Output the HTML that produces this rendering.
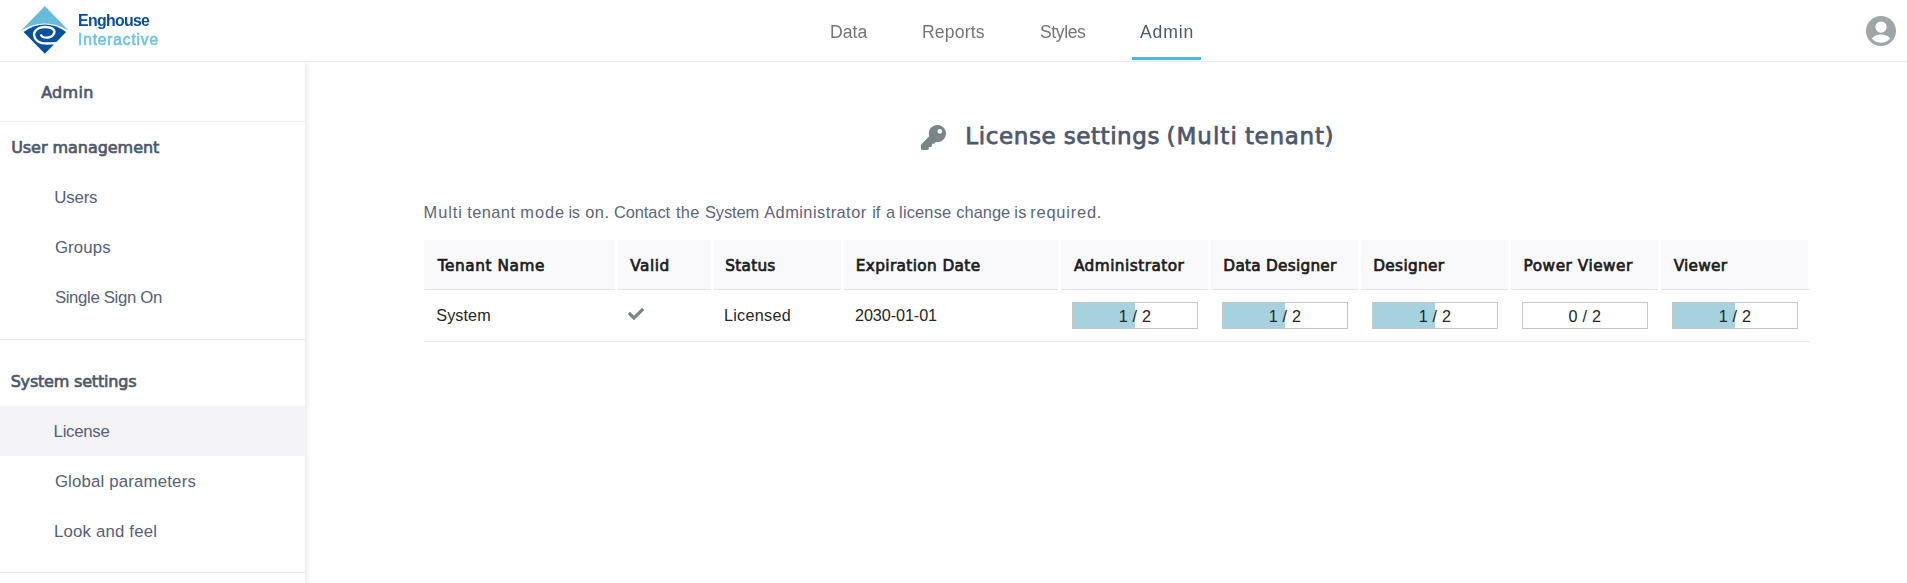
<!DOCTYPE html>
<html lang="en">
<head>
<meta charset="utf-8">
<title>License settings</title>
<style>
*{box-sizing:border-box;margin:0;padding:0}
html,body{width:1907px;height:583px;overflow:hidden;background:#fff}
body{font-family:"Liberation Sans",sans-serif;font-size:16px;color:#222;position:relative}
.abs{position:absolute}
.t{position:absolute;white-space:nowrap;line-height:20px;height:20px}
/* header */
#hdr{left:0;top:0;width:1907px;height:61px;background:#fff}
#hdrline{left:0;top:61px;width:1907px;height:1px;background:#ebecf2}
.nav{color:#757575;will-change:transform}
#n4{color:#4d586e}
#navul{left:1132px;top:57px;width:69px;height:3px;background:#43b9de}
.lg1{color:#054e9f;will-change:transform}
.lg2{color:#6cc3e4;will-change:transform}
/* sidebar */
#side{left:0;top:62px;width:305px;height:600px;background:#fff;box-shadow:0 0 7px rgba(0,0,0,.14);clip-path:inset(0 -20px 0 0)}
.sline{left:0;width:305px;height:1px;background:#e5e5e5}
#sel{left:0;top:406px;width:305px;height:50px;background:#f3f3f8}
.sh{font-weight:bold;font-size:17px;color:#4d586e}
.si{font-size:17px;color:#55607a}
/* main */
.tt{color:#4e586c}
.pp{color:#5b657a}
.th{top:240px;height:49px;background:#f9f9fb}
.thl{top:289px;height:1px;background:#dfe2e8}
.h{font-weight:bold;color:#1c1c1c}
.b{color:#262626}
#rowline{left:424px;top:341px;width:1386px;height:1px;background:#e9eaef}
.bar{top:302px;width:126px;height:27px;border:1px solid #c6c6c6;background:#fff}
.fill{left:0;top:0;width:62px;height:25px;background:#a6d1df}
.bt{color:#262626}
/*FIT*/
#n1{left:829.80px;top:19.80px;font-size:17.6px;font-weight:normal;letter-spacing:0.040px;line-height:24px;height:24px}
#n2{left:922.10px;top:19.80px;font-size:17.6px;font-weight:normal;letter-spacing:0.149px;line-height:24px;height:24px}
#n3{left:1039.60px;top:19.80px;font-size:17.6px;font-weight:normal;letter-spacing:-0.403px;line-height:24px;height:24px}
#n4{left:1140.00px;top:19.80px;font-size:17.6px;font-weight:normal;letter-spacing:0.854px;line-height:24px;height:24px}
#lg1{left:77.70px;top:10.94px;font-size:15.9px;font-weight:bold;letter-spacing:-0.696px;line-height:20px;height:20px}
#lg2{left:78.18px;top:29.59px;font-size:15.6px;font-weight:normal;letter-spacing:0.818px;-webkit-text-stroke:0.55px;line-height:20px;height:20px}
#s0{left:41.15px;top:83.06px;font-size:16.0px;font-weight:normal;letter-spacing:0.312px;-webkit-text-stroke:0.7px;font-family:'DejaVu Sans',sans-serif;line-height:20px;height:20px}
#s1{left:11.15px;top:137.96px;font-size:16.0px;font-weight:normal;letter-spacing:-0.040px;-webkit-text-stroke:0.7px;font-family:'DejaVu Sans',sans-serif;line-height:20px;height:20px}
#s2{left:54.30px;top:187.78px;font-size:16.8px;font-weight:normal;letter-spacing:-0.158px;line-height:20px;height:20px}
#s3{left:54.90px;top:237.78px;font-size:16.8px;font-weight:normal;letter-spacing:0.132px;line-height:20px;height:20px}
#s4{left:54.90px;top:287.78px;font-size:16.8px;font-weight:normal;letter-spacing:-0.347px;line-height:20px;height:20px}
#s5{left:10.65px;top:371.96px;font-size:16.0px;font-weight:normal;letter-spacing:-0.194px;-webkit-text-stroke:0.7px;font-family:'DejaVu Sans',sans-serif;line-height:20px;height:20px}
#s6{left:53.60px;top:421.78px;font-size:16.8px;font-weight:normal;letter-spacing:-0.268px;line-height:20px;height:20px}
#s7{left:54.90px;top:471.78px;font-size:16.8px;font-weight:normal;letter-spacing:0.178px;line-height:20px;height:20px}
#s8{left:54.10px;top:521.78px;font-size:16.8px;font-weight:normal;letter-spacing:0.172px;line-height:20px;height:20px}
#title{left:965.27px;top:121.49px;font-size:23.0px;font-weight:normal;letter-spacing:0.615px;-webkit-text-stroke:0.75px;font-family:'DejaVu Sans',sans-serif;line-height:30px;height:30px}
#title2{left:1063.78px;top:121.49px;font-size:23.0px;font-weight:normal;letter-spacing:0.559px;-webkit-text-stroke:0.75px;font-family:'DejaVu Sans',sans-serif;line-height:30px;height:30px}
#title3{left:1166.47px;top:121.49px;font-size:23.0px;font-weight:normal;letter-spacing:1.029px;-webkit-text-stroke:0.75px;font-family:'DejaVu Sans',sans-serif;line-height:30px;height:30px}
#title4{left:1244.88px;top:121.49px;font-size:23.0px;font-weight:normal;letter-spacing:0.719px;-webkit-text-stroke:0.75px;font-family:'DejaVu Sans',sans-serif;line-height:30px;height:30px}
#w0{left:423.60px;top:202.32px;font-size:16.4px;font-weight:normal;letter-spacing:0.934px;line-height:20px;height:20px}
#w1{left:467.20px;top:202.32px;font-size:16.4px;font-weight:normal;letter-spacing:0.437px;line-height:20px;height:20px}
#w2{left:520.30px;top:202.32px;font-size:16.4px;font-weight:normal;letter-spacing:0.972px;line-height:20px;height:20px}
#w3{left:568.60px;top:202.32px;font-size:16.4px;font-weight:normal;letter-spacing:-0.541px;line-height:20px;height:20px}
#w4{left:585.20px;top:202.32px;font-size:16.4px;font-weight:normal;letter-spacing:0.534px;line-height:20px;height:20px}
#w5{left:614.00px;top:202.32px;font-size:16.4px;font-weight:normal;letter-spacing:-0.072px;line-height:20px;height:20px}
#w6{left:676.00px;top:202.32px;font-size:16.4px;font-weight:normal;letter-spacing:0.315px;line-height:20px;height:20px}
#w7{left:705.00px;top:202.32px;font-size:16.4px;font-weight:normal;letter-spacing:-0.079px;line-height:20px;height:20px}
#w8{left:764.20px;top:202.32px;font-size:16.4px;font-weight:normal;letter-spacing:0.451px;line-height:20px;height:20px}
#w9{left:872.30px;top:202.32px;font-size:16.4px;font-weight:normal;letter-spacing:-0.141px;line-height:20px;height:20px}
#w10{left:885.95px;top:202.32px;font-size:16.4px;font-weight:normal;letter-spacing:-1.900px;line-height:20px;height:20px}
#w11{left:899.10px;top:202.32px;font-size:16.4px;font-weight:normal;letter-spacing:0.166px;line-height:20px;height:20px}
#w12{left:956.30px;top:202.32px;font-size:16.4px;font-weight:normal;letter-spacing:0.028px;line-height:20px;height:20px}
#w13{left:1014.20px;top:202.32px;font-size:16.4px;font-weight:normal;letter-spacing:0.359px;line-height:20px;height:20px}
#w14{left:1030.30px;top:202.32px;font-size:16.4px;font-weight:normal;letter-spacing:0.795px;line-height:20px;height:20px}
#h1{left:437.65px;top:255.71px;font-size:15.3px;font-weight:normal;letter-spacing:0.580px;-webkit-text-stroke:0.7px;font-family:'DejaVu Sans',sans-serif;line-height:20px;height:20px}
#h2{left:630.15px;top:255.71px;font-size:15.3px;font-weight:normal;letter-spacing:0.562px;-webkit-text-stroke:0.7px;font-family:'DejaVu Sans',sans-serif;line-height:20px;height:20px}
#h3{left:725.25px;top:255.71px;font-size:15.3px;font-weight:normal;letter-spacing:0.265px;-webkit-text-stroke:0.7px;font-family:'DejaVu Sans',sans-serif;line-height:20px;height:20px}
#h4{left:855.75px;top:255.71px;font-size:15.3px;font-weight:normal;letter-spacing:0.375px;-webkit-text-stroke:0.7px;font-family:'DejaVu Sans',sans-serif;line-height:20px;height:20px}
#h5{left:1073.95px;top:255.71px;font-size:15.3px;font-weight:normal;letter-spacing:0.468px;-webkit-text-stroke:0.7px;font-family:'DejaVu Sans',sans-serif;line-height:20px;height:20px}
#h6{left:1223.35px;top:255.71px;font-size:15.3px;font-weight:normal;letter-spacing:0.257px;-webkit-text-stroke:0.7px;font-family:'DejaVu Sans',sans-serif;line-height:20px;height:20px}
#h7{left:1373.25px;top:255.71px;font-size:15.3px;font-weight:normal;letter-spacing:0.325px;-webkit-text-stroke:0.7px;font-family:'DejaVu Sans',sans-serif;line-height:20px;height:20px}
#h8{left:1523.55px;top:255.71px;font-size:15.3px;font-weight:normal;letter-spacing:0.516px;-webkit-text-stroke:0.7px;font-family:'DejaVu Sans',sans-serif;line-height:20px;height:20px}
#h9{left:1673.75px;top:255.71px;font-size:15.3px;font-weight:normal;letter-spacing:0.238px;-webkit-text-stroke:0.7px;font-family:'DejaVu Sans',sans-serif;line-height:20px;height:20px}
#b1{left:436.30px;top:305.09px;font-size:16.2px;font-weight:normal;letter-spacing:0.083px;line-height:20px;height:20px}
#b3{left:723.90px;top:305.09px;font-size:16.2px;font-weight:normal;letter-spacing:0.286px;line-height:20px;height:20px}
#b4{left:855.00px;top:305.09px;font-size:16.2px;font-weight:normal;letter-spacing:-0.078px;line-height:20px;height:20px}
#p1{left:1118.80px;top:306.19px;font-size:16.2px;font-weight:normal;letter-spacing:0.151px;line-height:20px;height:20px}
#p2{left:1268.80px;top:306.19px;font-size:16.2px;font-weight:normal;letter-spacing:0.151px;line-height:20px;height:20px}
#p3{left:1418.80px;top:306.19px;font-size:16.2px;font-weight:normal;letter-spacing:0.151px;line-height:20px;height:20px}
#p4{left:1568.50px;top:306.19px;font-size:16.2px;font-weight:normal;letter-spacing:0.226px;line-height:20px;height:20px}
#p5{left:1718.80px;top:306.19px;font-size:16.2px;font-weight:normal;letter-spacing:0.151px;line-height:20px;height:20px}
/*ENDFIT*/
</style>
</head>
<body>
<!-- header -->
<div class="abs" id="hdr"></div>
<div class="abs" id="hdrline"></div>
<svg class="abs" id="logo" style="left:19px;top:4px" width="52" height="52" viewBox="19 4 52 52">
  <path d="M44.85 6.1 L68.6 30.4 Q44.85 16.6 21.05 30.4 Z" fill="#68bbdb"/>
  <path d="M23.6 31.9 Q44.85 17.1 66.1 31.9 L44.85 53.7 Z" fill="#04509f"/>
  <path d="M41.20 35.30C41.50 35.58 42.10 36.62 43.00 37.00C43.90 37.38 45.35 37.63 46.60 37.60C47.85 37.57 49.42 37.23 50.50 36.80C51.58 36.37 52.38 35.83 53.05 35.00C53.72 34.17 54.59 32.80 54.55 31.80C54.51 30.80 53.61 29.72 52.80 29.00C51.99 28.28 50.98 27.84 49.70 27.50C48.42 27.16 46.65 26.93 45.10 26.95C43.55 26.97 41.85 27.12 40.40 27.60C38.95 28.08 37.42 28.93 36.40 29.80C35.38 30.67 34.67 31.80 34.30 32.80C33.93 33.80 33.90 34.63 34.20 35.80C34.50 36.97 35.07 38.66 36.10 39.80C37.13 40.94 38.90 42.05 40.40 42.65C41.90 43.25 43.38 43.27 45.10 43.40C46.82 43.52 48.98 43.43 50.70 43.40C52.42 43.37 54.62 43.23 55.40 43.20" fill="none" stroke="#fff" stroke-width="2.4" stroke-linecap="round"/>
</svg>
<span class="t lg1" id="lg1">Enghouse</span>
<span class="t lg2" id="lg2">Interactive</span>

<span class="t nav" id="n1">Data</span>
<span class="t nav" id="n2">Reports</span>
<span class="t nav" id="n3">Styles</span>
<span class="t nav" id="n4">Admin</span>
<div class="abs" id="navul"></div>
<svg class="abs" id="user" style="left:1862.6px;top:12.6px" width="36" height="36" viewBox="0 0 24 24"><path fill="#9fa6a8" fill-rule="evenodd" d="M12 2C6.480 2 2 6.480 2 12s4.480 10 10 10 10-4.480 10-10S17.520 2 12 2zM12 5.650a3.750 3.750 0 1 1 0 7.500a3.750 3.750 0 1 1 0-7.500zM12 19.800c-2.030 0-4.430-.820-6.140-2.880C7.550 15.200 9.680 14.400 12 14.400s4.450.800 6.140 2.520C16.430 18.980 14.030 19.800 12 19.800z"/></svg>

<!-- sidebar -->
<div class="abs" id="side"></div>
<div class="abs sline" style="top:121px;background:#ebecf1"></div>
<div class="abs sline" style="top:339px"></div>
<div class="abs sline" style="top:572px"></div>
<div class="abs" id="sel"></div>
<span class="t sh" id="s0">Admin</span>
<span class="t sh" id="s1">User management</span>
<span class="t si" id="s2">Users</span>
<span class="t si" id="s3">Groups</span>
<span class="t si" id="s4">Single Sign On</span>
<span class="t sh" id="s5">System settings</span>
<span class="t si" id="s6">License</span>
<span class="t si" id="s7">Global parameters</span>
<span class="t si" id="s8">Look and feel</span>

<!-- main -->
<svg class="abs" id="key" style="left:921px;top:125px" width="25" height="25" viewBox="0 0 512 512"><path fill="#7b8589" d="M512 176.001C512 273.203 433.202 352 336 352c-11.220 0-22.190-1.062-32.827-3.069l-24.012 27.014A23.999 23.999 0 0 1 261.223 384H224v40c0 13.255-10.745 24-24 24h-40v40c0 13.255-10.745 24-24 24H24c-13.255 0-24-10.745-24-24v-78.059c0-6.365 2.529-12.470 7.029-16.971l161.802-161.802C163.108 213.814 160 195.271 160 176 160 78.798 238.797.001 335.999 0 433.488-.001 512 78.511 512 176.001zM336 128c0 26.510 21.490 48 48 48s48-21.490 48-48-21.490-48-48-48-48 21.490-48 48z"/></svg>
<span class="t tt" id="title">License</span> <span class="t tt" id="title2">settings</span> <span class="t tt" id="title3">(Multi</span> <span class="t tt" id="title4">tenant)</span>
<span class="t pp" id="w0">Multi</span> <span class="t pp" id="w1">tenant</span> <span class="t pp" id="w2">mode</span> <span class="t pp" id="w3">is</span> <span class="t pp" id="w4">on.</span> <span class="t pp" id="w5">Contact</span> <span class="t pp" id="w6">the</span> <span class="t pp" id="w7">System</span> <span class="t pp" id="w8">Administrator</span> <span class="t pp" id="w9">if</span> <span class="t pp" id="w10">a</span> <span class="t pp" id="w11">license</span> <span class="t pp" id="w12">change</span> <span class="t pp" id="w13">is</span> <span class="t pp" id="w14">required.</span>

<div class="abs th" style="left:424px;width:191px"></div><div class="abs thl" style="left:424px;width:191px"></div>
<div class="abs th" style="left:618px;width:93px"></div><div class="abs thl" style="left:618px;width:93px"></div>
<div class="abs th" style="left:714px;width:127px"></div><div class="abs thl" style="left:714px;width:127px"></div>
<div class="abs th" style="left:844px;width:214px"></div><div class="abs thl" style="left:844px;width:214px"></div>
<div class="abs th" style="left:1061px;width:147px"></div><div class="abs thl" style="left:1061px;width:147px"></div>
<div class="abs th" style="left:1211px;width:147px"></div><div class="abs thl" style="left:1211px;width:147px"></div>
<div class="abs th" style="left:1361px;width:147px"></div><div class="abs thl" style="left:1361px;width:147px"></div>
<div class="abs th" style="left:1511px;width:147px"></div><div class="abs thl" style="left:1511px;width:147px"></div>
<div class="abs th" style="left:1661px;width:147px"></div><div class="abs thl" style="left:1661px;width:149px"></div>

<span class="t h" id="h1">Tenant Name</span>
<span class="t h" id="h2">Valid</span>
<span class="t h" id="h3">Status</span>
<span class="t h" id="h4">Expiration Date</span>
<span class="t h" id="h5">Administrator</span>
<span class="t h" id="h6">Data Designer</span>
<span class="t h" id="h7">Designer</span>
<span class="t h" id="h8">Power Viewer</span>
<span class="t h" id="h9">Viewer</span>

<span class="t b" id="b1">System</span>
<svg class="abs" id="chk" style="left:628px;top:306px" width="16" height="16" viewBox="0 0 512 512"><path fill="#7b8589" d="M173.898 439.404l-166.400-166.400c-9.997-9.997-9.997-26.206 0-36.204l36.203-36.204c9.997-9.998 26.207-9.998 36.204 0L192 312.690 432.095 72.596c9.997-9.997 26.207-9.997 36.204 0l36.203 36.204c9.997 9.997 9.997 26.206 0 36.204l-294.400 294.401c-9.998 9.997-26.207 9.997-36.204-.001z"/></svg>
<span class="t b" id="b3">Licensed</span>
<span class="t b" id="b4">2030-01-01</span>

<div class="abs bar" style="left:1072px"><div class="abs fill"></div></div>
<div class="abs bar" style="left:1222px"><div class="abs fill"></div></div>
<div class="abs bar" style="left:1372px"><div class="abs fill"></div></div>
<div class="abs bar" style="left:1522px"></div>
<div class="abs bar" style="left:1672px"><div class="abs fill"></div></div>
<span class="t bt" id="p1">1 / 2</span>
<span class="t bt" id="p2">1 / 2</span>
<span class="t bt" id="p3">1 / 2</span>
<span class="t bt" id="p4">0 / 2</span>
<span class="t bt" id="p5">1 / 2</span>
<div class="abs" id="rowline"></div>
</body>
</html>
